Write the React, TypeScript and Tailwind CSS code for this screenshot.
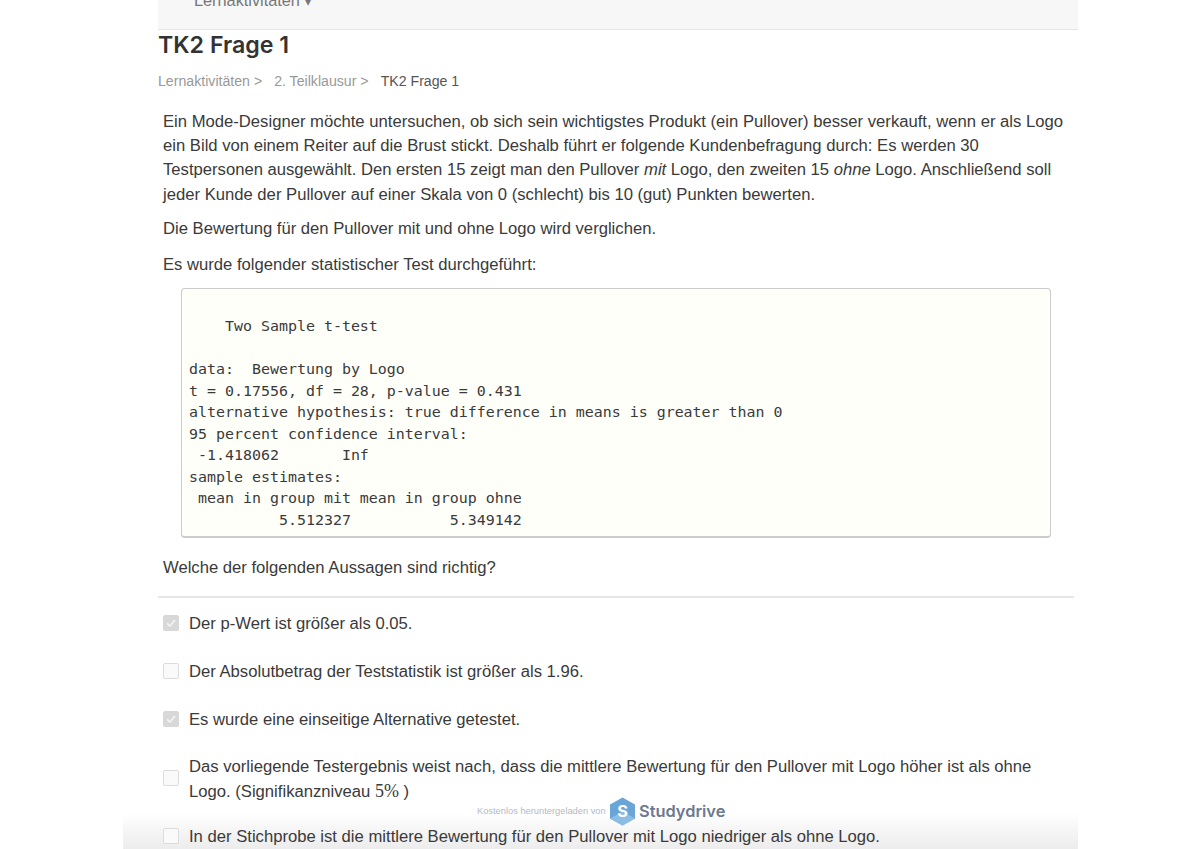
import React from "react";

const sans = { fontFamily: '"Liberation Sans", Arial, sans-serif' };

function Box({ checked }: { checked?: boolean }) {
  return (
    <span className={`mb-[2px] flex h-4 w-4 shrink-0 items-center justify-center rounded-[2px] border ${checked ? "border-[#d8d8d8] bg-[#d8d8d8]" : "border-[#dcdcdc] bg-[#fafafa]"}`}>
      {checked && (
        <svg viewBox="0 0 16 16" className="h-3.5 w-3.5" fill="none" stroke="#f4f4f4" strokeWidth="2">
          <path d="M3.5 8.5 L6.8 11.5 L12.5 4.5" />
        </svg>
      )}
    </span>
  );
}

const pre = `
    Two Sample t-test

data:  Bewertung by Logo
t = 0.17556, df = 28, p-value = 0.431
alternative hypothesis: true difference in means is greater than 0
95 percent confidence interval:
 -1.418062       Inf
sample estimates:
 mean in group mit mean in group ohne
          5.512327           5.349142`;

function Option({ checked, children, className }: { checked?: boolean; children: React.ReactNode; className?: string }) {
  return (
    <div className={`flex items-center gap-[10px] pl-[5px] pr-[40px] ${className ?? ""}`}>
      <Box checked={checked} />
      <div className="leading-[24px] text-[#3a3a3a]">{children}</div>
    </div>
  );
}

export default function App() {
  return (
    <div className="relative h-[849px] w-[1200px] overflow-hidden bg-white text-[16.65px] text-[#3a3a3a]" style={sans}>
      <div className="absolute bottom-0 left-[123px] h-[36px] w-[955px] bg-gradient-to-b from-[#ffffff00] to-[#ececec]" />
      <div className="relative ml-[158px] w-[920px]">
        <div className="flex h-[30px] items-end overflow-hidden border-b border-[#e6e6e6] bg-[#f7f7f7] pb-[19px] pl-[36px] text-[16.3px] leading-[20px] text-[#777]">
          Lernaktivitäten ▾
        </div>
        <h1 className="text-[23.2px] font-semibold leading-[30px] text-[#333]" style={{ fontFamily: "Inter, sans-serif" }}>
          TK2 Frage 1
        </h1>
        <div className="mt-[13px] flex text-[14.15px] leading-[16px] text-[#999]">
          <span>Lernaktivitäten &gt;</span>
          <span className="ml-[12px]">2. Teilklausur &gt;</span>
          <span className="ml-[12px] text-[#555]">TK2 Frage 1</span>
        </div>
        <div className="mt-[21px] pl-[5px] pr-[4px]">
          <p className="leading-[24.2px]">
            Ein Mode-Designer möchte untersuchen, ob sich sein wichtigstes Produkt (ein Pullover) besser verkauft, wenn er als Logo ein Bild von einem Reiter auf die Brust stickt. Deshalb führt er folgende Kundenbefragung durch: Es werden 30 Testpersonen ausgewählt. Den ersten 15 zeigt man den Pullover <em>mit</em> Logo, den zweiten 15 <em>ohne</em> Logo. Anschließend soll jeder Kunde der Pullover auf einer Skala von 0 (schlecht) bis 10 (gut) Punkten bewerten.
          </p>
          <p className="mt-[10px] leading-[24px]">Die Bewertung für den Pullover mit und ohne Logo wird verglichen.</p>
          <p className="mt-[12px] leading-[24px]">Es wurde folgender statistischer Test durchgeführt:</p>
        </div>
        <pre
          className="ml-[23px] mr-[27px] mt-[11px] h-[250px] rounded-[4px] border border-b-2 border-[#cccccc] bg-[#fffffa] pl-[7px] pt-[6px] text-[14.95px] leading-[21.5px] text-[#3a3a3a]"
          style={{ fontFamily: '"DejaVu Sans Mono", monospace' }}
        >
          {pre}
        </pre>
        <p className="mt-[18px] pl-[5px] leading-[24px]">Welche der folgenden Aussagen sind richtig?</p>
        <div className="mr-[4px] mt-[16px] border-t-2 border-[#e6e6e6]" />
        <div className="mt-[14px] flex flex-col">
          <Option checked>Der p-Wert ist größer als 0.05.</Option>
          <Option className="mt-[24px]">Der Absolutbetrag der Teststatistik ist größer als 1.96.</Option>
          <Option checked className="mt-[24px]">Es wurde eine einseitige Alternative getestet.</Option>
          <Option className="mt-[23px]">
            Das vorliegende Testergebnis weist nach, dass die mittlere Bewertung für den Pullover mit Logo höher ist als ohne Logo. (Signifikanzniveau{" "}
            <span className="text-[18px]" style={{ fontFamily: '"Liberation Serif", serif' }}>5%</span> )
          </Option>
          <Option className="mt-[21px]">In der Stichprobe ist die mittlere Bewertung für den Pullover mit Logo niedriger als ohne Logo.</Option>
        </div>
      </div>

      <div className="absolute left-[477px] top-[797px] flex items-center">
        <span className="w-[133px] whitespace-nowrap text-[9.3px] text-[#b4bac2]">Kostenlos heruntergeladen von</span>
        <svg viewBox="0 0 26 29" className="h-[29px] w-[25px]">
          <path d="M13 0 L26 7.2 L26 21.8 L13 29 L0 21.8 L0 7.2 Z" fill="#6aa5d8" />
          <path d="M13 14.5 L26 21.8 L13 29 L0 21.8 Z" fill="#8cbde5" />
          <text x="13" y="20" textAnchor="middle" fontSize="17" fontWeight="700" fill="#fff" fontFamily="Inter, sans-serif">S</text>
        </svg>
        <span className="ml-[4px] text-[16.4px] font-semibold leading-[29px] text-[#6b7a90]" style={{ fontFamily: "Inter, sans-serif" }}>Studydrive</span>
      </div>
    </div>
  );
}
